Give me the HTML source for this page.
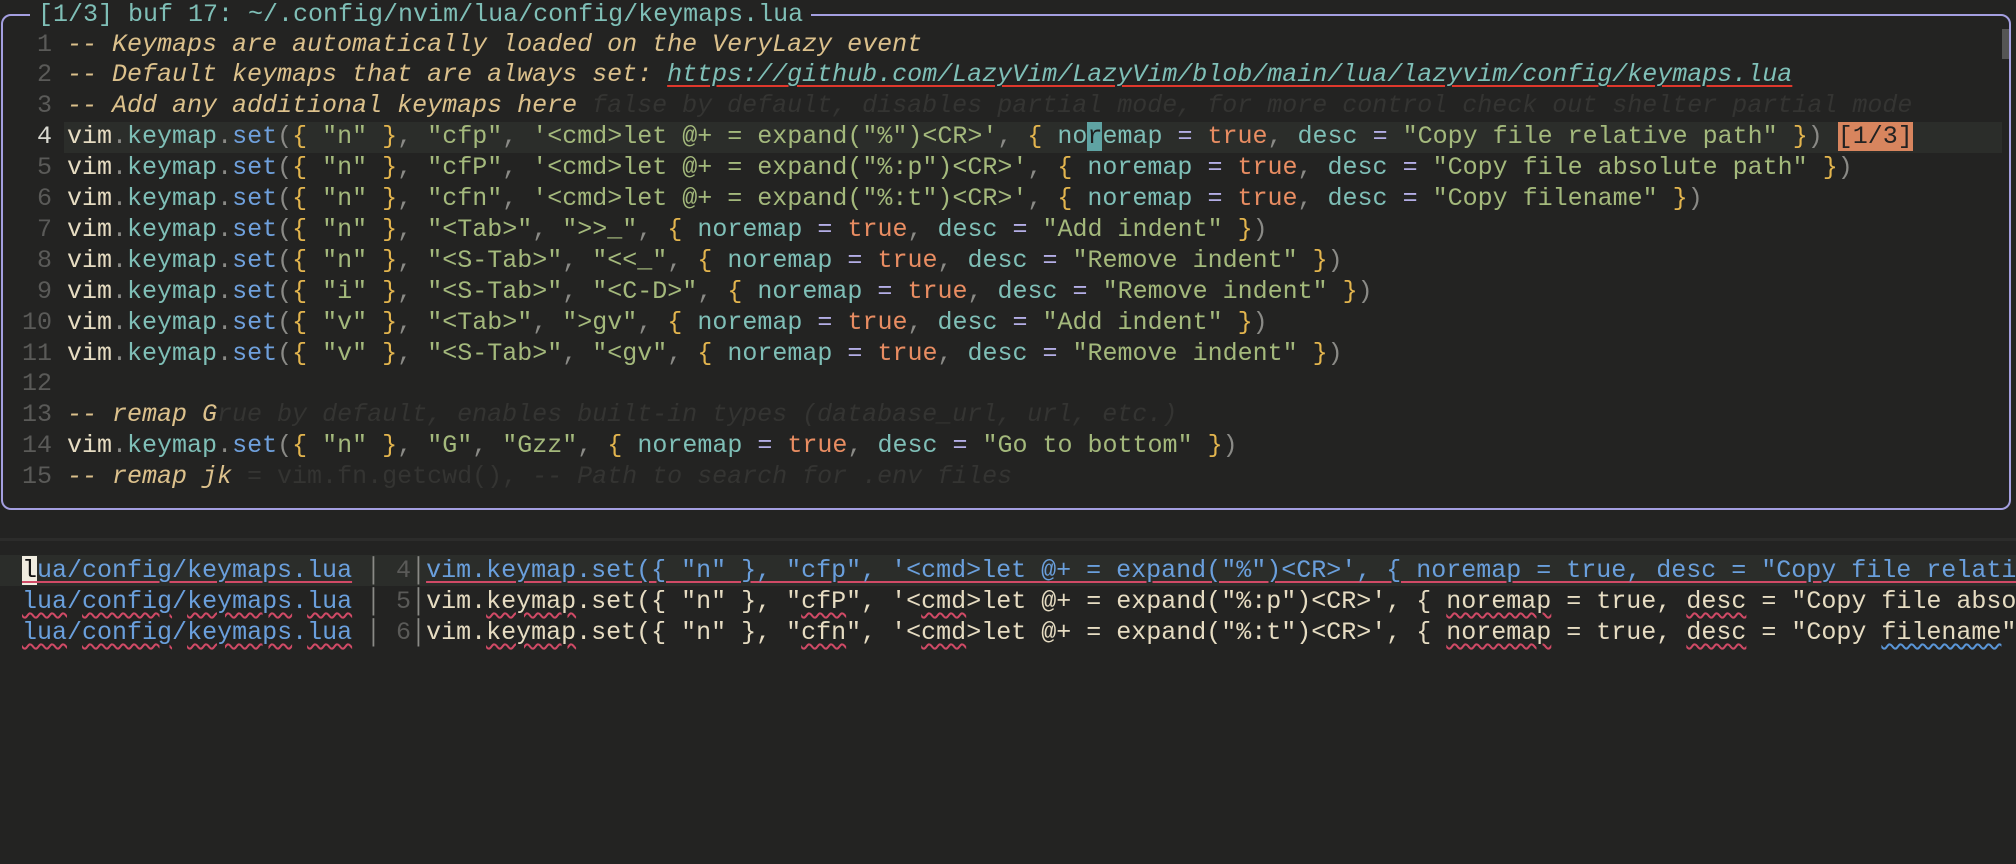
<!DOCTYPE html>
<html><head><meta charset="utf-8"><style>
html,body{margin:0;padding:0;background:#232322;width:2016px;height:864px;overflow:hidden}
body{font-family:"Liberation Mono",monospace;font-size:25px;color:#e6dcc2;position:relative}
.clip{position:absolute;left:0;top:0;width:2016px;height:864px;overflow:hidden}
.box{position:absolute;left:1px;top:14px;width:2006px;height:492px;border:2px solid #a49fe0;border-radius:10px}
.title{position:absolute;left:30px;top:0px;background:#232322;color:#7fbfb7;padding:0 8px;line-height:30px;white-space:pre}
pre{margin:0;font:inherit;line-height:30.9px;white-space:pre;position:absolute}
.ln{color:#5a5a58}.cl{color:#d8d8d0}
.c{color:#dcc18c;font-style:italic}
.u{color:#7fbfb7;font-style:italic;text-decoration:underline;text-decoration-color:#e0382c;text-decoration-thickness:2px;text-underline-offset:4px}
.v{color:#e6dcc2}.k{color:#7fbfb7}.s{color:#6fa0dc}.p{color:#8a8a86}.b{color:#e3b54e}.g{color:#a4b97c}.t{color:#e98d62}.e{color:#b4aee6}.d{color:#7fbfb7}.m{color:#6a6a66}
.cur{background:#5fa3a3;color:#1e1e1e}
.curline{position:absolute;left:64px;top:122px;width:1938px;height:31px;background:#2b2d2a}
.badge{background:#d8855e;color:#222}
.sb{position:absolute;left:2002px;top:29px;width:7px;height:30px;background:#555}
.sep{position:absolute;left:0;top:538px;width:2016px;height:3px;background:#2c2c2b}
.row1{position:absolute;left:0;top:555px;width:2016px;height:31px;background:#2b2d2a}
.bl{color:#6a9fdc}
.w{text-decoration:underline wavy #d04a66;text-underline-offset:4px;text-decoration-thickness:1.5px}
.wb{text-decoration:underline wavy #5a96d8;text-underline-offset:4px;text-decoration-thickness:1.5px}
.ul{text-decoration:underline #d04a66;text-underline-offset:4px;text-decoration-thickness:2px}
.vb{color:#8a8a86}
.bc{background:#f0ece0;color:#111}
</style></head><body><div class="clip">
<div class="curline"></div>
<div class="box"></div>
<div class="title">[1/3] buf 17: ~/.config/nvim/lua/config/keymaps.lua</div>
<div class="sb"></div>
<pre style="left:22px;top:29.5px"><span class="ln"> 1 </span><span class="c">-- Keymaps are automatically loaded on the VeryLazy event</span>
<span class="ln"> 2 </span><span class="c">-- Default keymaps that are always set: </span><span class="u">https://github.com/LazyVim/LazyVim/blob/main/lua/lazyvim/config/keymaps.lua</span>
<span class="ln"> 3 </span><span class="c">-- Add any additional keymaps here</span> <span class="m" style="color:#343432;font-style:italic">false by default, disables partial mode, for more control check out shelter partial mode</span>
<span class="cl"> 4 </span><span class="v">vim</span><span class="p">.</span><span class="k">keymap</span><span class="p">.</span><span class="s">set</span><span class="p">(</span><span class="b">{</span> <span class="g">"n"</span> <span class="b">}</span><span class="p">,</span> <span class="g">"cfp"</span><span class="p">,</span> <span class="g">'&lt;cmd&gt;let @+ = expand("%")&lt;CR&gt;'</span><span class="p">,</span> <span class="b">{</span> <span class="d">no<span class="cur">r</span>emap</span> <span class="e">=</span> <span class="t">true</span><span class="p">,</span> <span class="d">desc</span> <span class="e">=</span> <span class="g">"Copy file relative path"</span> <span class="b">}</span><span class="p">)</span> <span class="badge">[1/3]</span>
<span class="ln"> 5 </span><span class="v">vim</span><span class="p">.</span><span class="k">keymap</span><span class="p">.</span><span class="s">set</span><span class="p">(</span><span class="b">{</span> <span class="g">"n"</span> <span class="b">}</span><span class="p">,</span> <span class="g">"cfP"</span><span class="p">,</span> <span class="g">'&lt;cmd&gt;let @+ = expand("%:p")&lt;CR&gt;'</span><span class="p">,</span> <span class="b">{</span> <span class="d">noremap</span> <span class="e">=</span> <span class="t">true</span><span class="p">,</span> <span class="d">desc</span> <span class="e">=</span> <span class="g">"Copy file absolute path"</span> <span class="b">}</span><span class="p">)</span>
<span class="ln"> 6 </span><span class="v">vim</span><span class="p">.</span><span class="k">keymap</span><span class="p">.</span><span class="s">set</span><span class="p">(</span><span class="b">{</span> <span class="g">"n"</span> <span class="b">}</span><span class="p">,</span> <span class="g">"cfn"</span><span class="p">,</span> <span class="g">'&lt;cmd&gt;let @+ = expand("%:t")&lt;CR&gt;'</span><span class="p">,</span> <span class="b">{</span> <span class="d">noremap</span> <span class="e">=</span> <span class="t">true</span><span class="p">,</span> <span class="d">desc</span> <span class="e">=</span> <span class="g">"Copy filename"</span> <span class="b">}</span><span class="p">)</span>
<span class="ln"> 7 </span><span class="v">vim</span><span class="p">.</span><span class="k">keymap</span><span class="p">.</span><span class="s">set</span><span class="p">(</span><span class="b">{</span> <span class="g">"n"</span> <span class="b">}</span><span class="p">,</span> <span class="g">"&lt;Tab&gt;"</span><span class="p">,</span> <span class="g">"&gt;&gt;_"</span><span class="p">,</span> <span class="b">{</span> <span class="d">noremap</span> <span class="e">=</span> <span class="t">true</span><span class="p">,</span> <span class="d">desc</span> <span class="e">=</span> <span class="g">"Add indent"</span> <span class="b">}</span><span class="p">)</span>
<span class="ln"> 8 </span><span class="v">vim</span><span class="p">.</span><span class="k">keymap</span><span class="p">.</span><span class="s">set</span><span class="p">(</span><span class="b">{</span> <span class="g">"n"</span> <span class="b">}</span><span class="p">,</span> <span class="g">"&lt;S-Tab&gt;"</span><span class="p">,</span> <span class="g">"&lt;&lt;_"</span><span class="p">,</span> <span class="b">{</span> <span class="d">noremap</span> <span class="e">=</span> <span class="t">true</span><span class="p">,</span> <span class="d">desc</span> <span class="e">=</span> <span class="g">"Remove indent"</span> <span class="b">}</span><span class="p">)</span>
<span class="ln"> 9 </span><span class="v">vim</span><span class="p">.</span><span class="k">keymap</span><span class="p">.</span><span class="s">set</span><span class="p">(</span><span class="b">{</span> <span class="g">"i"</span> <span class="b">}</span><span class="p">,</span> <span class="g">"&lt;S-Tab&gt;"</span><span class="p">,</span> <span class="g">"&lt;C-D&gt;"</span><span class="p">,</span> <span class="b">{</span> <span class="d">noremap</span> <span class="e">=</span> <span class="t">true</span><span class="p">,</span> <span class="d">desc</span> <span class="e">=</span> <span class="g">"Remove indent"</span> <span class="b">}</span><span class="p">)</span>
<span class="ln">10 </span><span class="v">vim</span><span class="p">.</span><span class="k">keymap</span><span class="p">.</span><span class="s">set</span><span class="p">(</span><span class="b">{</span> <span class="g">"v"</span> <span class="b">}</span><span class="p">,</span> <span class="g">"&lt;Tab&gt;"</span><span class="p">,</span> <span class="g">"&gt;gv"</span><span class="p">,</span> <span class="b">{</span> <span class="d">noremap</span> <span class="e">=</span> <span class="t">true</span><span class="p">,</span> <span class="d">desc</span> <span class="e">=</span> <span class="g">"Add indent"</span> <span class="b">}</span><span class="p">)</span>
<span class="ln">11 </span><span class="v">vim</span><span class="p">.</span><span class="k">keymap</span><span class="p">.</span><span class="s">set</span><span class="p">(</span><span class="b">{</span> <span class="g">"v"</span> <span class="b">}</span><span class="p">,</span> <span class="g">"&lt;S-Tab&gt;"</span><span class="p">,</span> <span class="g">"&lt;gv"</span><span class="p">,</span> <span class="b">{</span> <span class="d">noremap</span> <span class="e">=</span> <span class="t">true</span><span class="p">,</span> <span class="d">desc</span> <span class="e">=</span> <span class="g">"Remove indent"</span> <span class="b">}</span><span class="p">)</span>
<span class="ln">12 </span>
<span class="ln">13 </span><span class="c">-- remap G</span><span style="color:#343432;font-style:italic">rue by default, enables built-in types (database_url, url, etc.)</span>
<span class="ln">14 </span><span class="v">vim</span><span class="p">.</span><span class="k">keymap</span><span class="p">.</span><span class="s">set</span><span class="p">(</span><span class="b">{</span> <span class="g">"n"</span> <span class="b">}</span><span class="p">,</span> <span class="g">"G"</span><span class="p">,</span> <span class="g">"Gzz"</span><span class="p">,</span> <span class="b">{</span> <span class="d">noremap</span> <span class="e">=</span> <span class="t">true</span><span class="p">,</span> <span class="d">desc</span> <span class="e">=</span> <span class="g">"Go to bottom"</span> <span class="b">}</span><span class="p">)</span>
<span class="ln">15 </span><span class="c">-- remap jk</span><span style="color:#343432"> = vim.fn.getcwd(), <i>-- Path to search for .env files</i></span></pre>
<div class="sep"></div>
<div class="row1"></div>
<pre style="left:22px;top:555px;line-height:31px"><span class="bl ul"><span class="bc">l</span>ua/config/keymaps.lua</span>
<span class="bl"><span class="w">lua</span>/<span class="w">config</span>/<span class="w">keymaps</span>.<span class="w">lua</span></span>
<span class="bl"><span class="w">lua</span>/<span class="w">config</span>/<span class="w">keymaps</span>.<span class="w">lua</span></span></pre>
<pre style="left:366px;top:555px;line-height:31px"><span class="vb">│</span> <span class="ln">4</span><span class="vb">│</span><span class="bl ul">vim.keymap.set({ "n" }, "cfp", '&lt;cmd&gt;let @+ = expand("%")&lt;CR&gt;', { noremap = true, desc = "Copy file relative path" })</span>
<span class="vb">│</span> <span class="ln">5</span><span class="vb">│</span><span class="v">vim.<span class="w">keymap</span>.set({ "n" }, "<span class="w">cfP</span>", '&lt;<span class="w">cmd</span>&gt;let @+ = expand("%:p")&lt;CR&gt;', { <span class="w">noremap</span> = true, <span class="w">desc</span> = "Copy file absolute path" })</span>
<span class="vb">│</span> <span class="ln">6</span><span class="vb">│</span><span class="v">vim.<span class="w">keymap</span>.set({ "n" }, "<span class="w">cfn</span>", '&lt;<span class="w">cmd</span>&gt;let @+ = expand("%:t")&lt;CR&gt;', { <span class="w">noremap</span> = true, <span class="w">desc</span> = "Copy <span class="wb">filename</span>" })</span></pre>
</div></body></html>
